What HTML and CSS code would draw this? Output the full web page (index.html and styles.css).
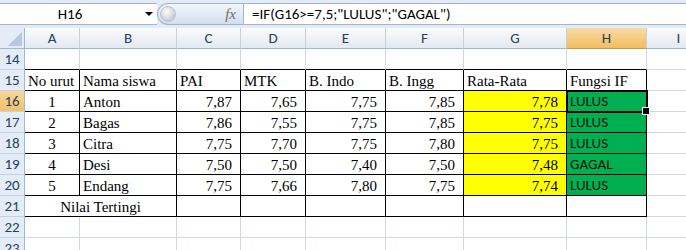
FILE: index.html
```
<!DOCTYPE html>
<html>
<head lang="id">
    <meta charset="UTF-8">
    <title>Fungsi IF</title>
    <link rel="stylesheet" href="styles.css">
</head>
<body>
<div class="formula-bar">
    <div class="name-box">
        <span class="name">H16</span>
        <span class="drop"></span>
    </div>
    <div class="fx-box">
        <span class="knob"></span>
        <span class="fx">fx</span>
    </div>
    <div class="formula">=IF(G16&gt;=7,5;"LULUS";"GAGAL")</div>
</div>
<table class="sheet">
    <colgroup>
        <col class="w-rh">
        <col class="w-a">
        <col class="w-b">
        <col class="w-c">
        <col class="w-d">
        <col class="w-e">
        <col class="w-f">
        <col class="w-g">
        <col class="w-h">
        <col class="w-i">
    </colgroup>
    <tr>
        <th class="corner"></th>
        <th>A</th><th>B</th><th>C</th><th>D</th><th>E</th><th>F</th><th>G</th>
        <th class="on">H</th><th>I</th>
    </tr>
    <tr>
        <td class="rh">14</td>
        <td class="top"></td><td class="top"></td><td class="top"></td><td class="top"></td>
        <td class="top"></td><td class="top"></td><td class="top"></td><td class="top"></td>
        <td></td>
    </tr>
    <tr>
        <td class="rh">15</td>
        <td class="t">No urut</td>
        <td class="t">Nama siswa</td>
        <td class="t">PAI</td>
        <td class="t">MTK</td>
        <td class="t">B. Indo</td>
        <td class="t">B. Ingg</td>
        <td class="t">Rata-Rata</td>
        <td class="t">Fungsi IF</td>
        <td></td>
    </tr>
    <tr>
        <td class="rh on">16</td>
        <td class="t c">1</td>
        <td class="t">Anton</td>
        <td class="t n">7,87</td>
        <td class="t n">7,65</td>
        <td class="t n">7,75</td>
        <td class="t n">7,85</td>
        <td class="t n y">7,78</td>
        <td class="t g sel">LULUS</td>
        <td></td>
    </tr>
    <tr>
        <td class="rh">17</td>
        <td class="t c">2</td>
        <td class="t">Bagas</td>
        <td class="t n">7,86</td>
        <td class="t n">7,55</td>
        <td class="t n">7,75</td>
        <td class="t n">7,85</td>
        <td class="t n y">7,75</td>
        <td class="t g">LULUS</td>
        <td></td>
    </tr>
    <tr>
        <td class="rh">18</td>
        <td class="t c">3</td>
        <td class="t">Citra</td>
        <td class="t n">7,75</td>
        <td class="t n">7,70</td>
        <td class="t n">7,75</td>
        <td class="t n">7,80</td>
        <td class="t n y">7,75</td>
        <td class="t g">LULUS</td>
        <td></td>
    </tr>
    <tr>
        <td class="rh">19</td>
        <td class="t c">4</td>
        <td class="t">Desi</td>
        <td class="t n">7,50</td>
        <td class="t n">7,50</td>
        <td class="t n">7,40</td>
        <td class="t n">7,50</td>
        <td class="t n y">7,48</td>
        <td class="t g">GAGAL</td>
        <td></td>
    </tr>
    <tr>
        <td class="rh">20</td>
        <td class="t c">5</td>
        <td class="t">Endang</td>
        <td class="t n">7,75</td>
        <td class="t n">7,66</td>
        <td class="t n">7,80</td>
        <td class="t n">7,75</td>
        <td class="t n y">7,74</td>
        <td class="t g">LULUS</td>
        <td></td>
    </tr>
    <tr>
        <td class="rh">21</td>
        <td class="t c" colspan="2">Nilai Tertingi</td>
        <td class="t"></td><td class="t"></td><td class="t"></td>
        <td class="t"></td><td class="t"></td><td class="t"></td>
        <td></td>
    </tr>
    <tr>
        <td class="rh">22</td>
        <td></td><td></td><td></td><td></td><td></td><td></td><td></td><td></td><td></td>
    </tr>
    <tr>
        <td class="rh">23</td>
        <td></td><td></td><td></td><td></td><td></td><td></td><td></td><td></td><td></td>
    </tr>
</table>
</body>
</html>
```
FILE: styles.css
```
* {
    margin: 0;
    padding: 0;
    box-sizing: border-box;
}

body {
    width: 686px;
    height: 250px;
    overflow: hidden;
    background: #fff;
    font-family: "Liberation Serif", serif;
}

/* formula bar */
.formula-bar {
    display: flex;
    height: 28px;
    padding: 3px 0;
    background: #e3ebf6;
}

.name-box {
    display: flex;
    align-items: center;
    width: 157px;
    background: #fff;
    border-top: 1px solid #a4b5cc;
    border-bottom: 1px solid #a4b5cc;
}

.name-box .name {
    width: 140px;
    text-align: center;
    font-family: Carlito, "Liberation Sans", sans-serif;
    font-size: 15px;
    color: #000;
}

.name-box .drop {
    margin-left: 5px;
    border-left: 4px solid transparent;
    border-right: 4px solid transparent;
    border-top: 4px solid #000;
}

.fx-box {
    display: flex;
    align-items: center;
    width: 86px;
    border: 1px solid #9fb3cc;
    border-right: none;
    border-radius: 11px 0 0 11px;
    background: linear-gradient(#f2f6fb, #d3dfee);
}

.fx-box .knob {
    width: 16px;
    height: 16px;
    margin-left: 2px;
    border-radius: 50%;
    border: 1px solid #b9c4d0;
    background: radial-gradient(circle at 40% 35%, #fdfdfd, #c9ced5 70%, #aab3be);
}

.fx-box .fx {
    margin-left: auto;
    padding-right: 7px;
    font-family: "Liberation Serif", serif;
    font-style: italic;
    font-size: 15px;
    color: #6b6b6b;
}

.formula {
    flex: 1;
    background: #fff;
    border: 1px solid #a4b5cc;
    border-right: none;
    padding-left: 8px;
    font-family: Carlito, "Liberation Sans", sans-serif;
    font-size: 15px;
    line-height: 20px;
    color: #000;
}

/* sheet grid */
.sheet {
    border-collapse: separate;
    border-spacing: 0;
    table-layout: fixed;
    width: 711px;
}

.w-rh { width: 25px; }
.w-a { width: 55px; }
.w-b { width: 97px; }
.w-c { width: 64px; }
.w-d { width: 65px; }
.w-e { width: 80px; }
.w-f { width: 78px; }
.w-g { width: 103px; }
.w-h { width: 80px; }
.w-i { width: 64px; }

.sheet td,
.sheet th {
    height: 21px;
    padding: 0 3px;
    border-right: 1px solid #d0d7e5;
    border-bottom: 1px solid #d0d7e5;
    vertical-align: bottom;
    line-height: 17px;
    font-size: 15px;
    font-weight: normal;
    white-space: nowrap;
    color: #000;
}

.sheet th {
    vertical-align: middle;
    line-height: 20px;
    text-align: center;
    font-family: Carlito, "Liberation Sans", sans-serif;
    font-size: 15px;
    color: #27415f;
    background: linear-gradient(#fafbfd, #e3e9f1);
    border-right: 1px solid #c7d1de;
    border-bottom: 1px solid #9eb6ce;
}

.sheet th.on {
    background: linear-gradient(#f9dca5, #f1bd60);
    border-bottom-color: #c29b53;
}

.sheet th.corner {
    position: relative;
    background: #e4ecf7;
    border-right: 1px solid #9eb6ce;
}

.sheet th.corner::after {
    content: "";
    position: absolute;
    right: 2px;
    bottom: 2px;
    border-left: 14px solid transparent;
    border-bottom: 14px solid #b7c7dc;
}

.sheet td.rh {
    padding: 0;
    text-align: center;
    vertical-align: middle;
    line-height: 20px;
    font-family: Carlito, "Liberation Sans", sans-serif;
    font-size: 15px;
    color: #27415f;
    background: #e4ecf7;
    border-right: 1px solid #9eb6ce;
    border-bottom: 1px solid #c5d2e3;
}

.sheet td.rh.on {
    background: linear-gradient(#f9d899, #f1c06a);
}

.sheet td.top {
    border-bottom-color: #000;
}

.sheet td.t {
    border-right-color: #000;
    border-bottom-color: #000;
}

.sheet td.c {
    text-align: center;
}

.sheet td.n {
    text-align: right;
    padding-right: 8px;
}

.sheet td.y {
    background: #ffff00;
}

.sheet td.g {
    padding-bottom: 1px;
    font-family: Carlito, "Liberation Sans", sans-serif;
    font-size: 15px;
    color: #111;
    background: #00b050;
}

.sheet td.sel {
    position: relative;
    outline: 2px solid #000;
    outline-offset: -1px;
}

.sheet td.sel::after {
    content: "";
    position: absolute;
    right: -4px;
    bottom: -4px;
    width: 6px;
    height: 6px;
    background: #000;
    border: 1px solid #fff;
}
```
